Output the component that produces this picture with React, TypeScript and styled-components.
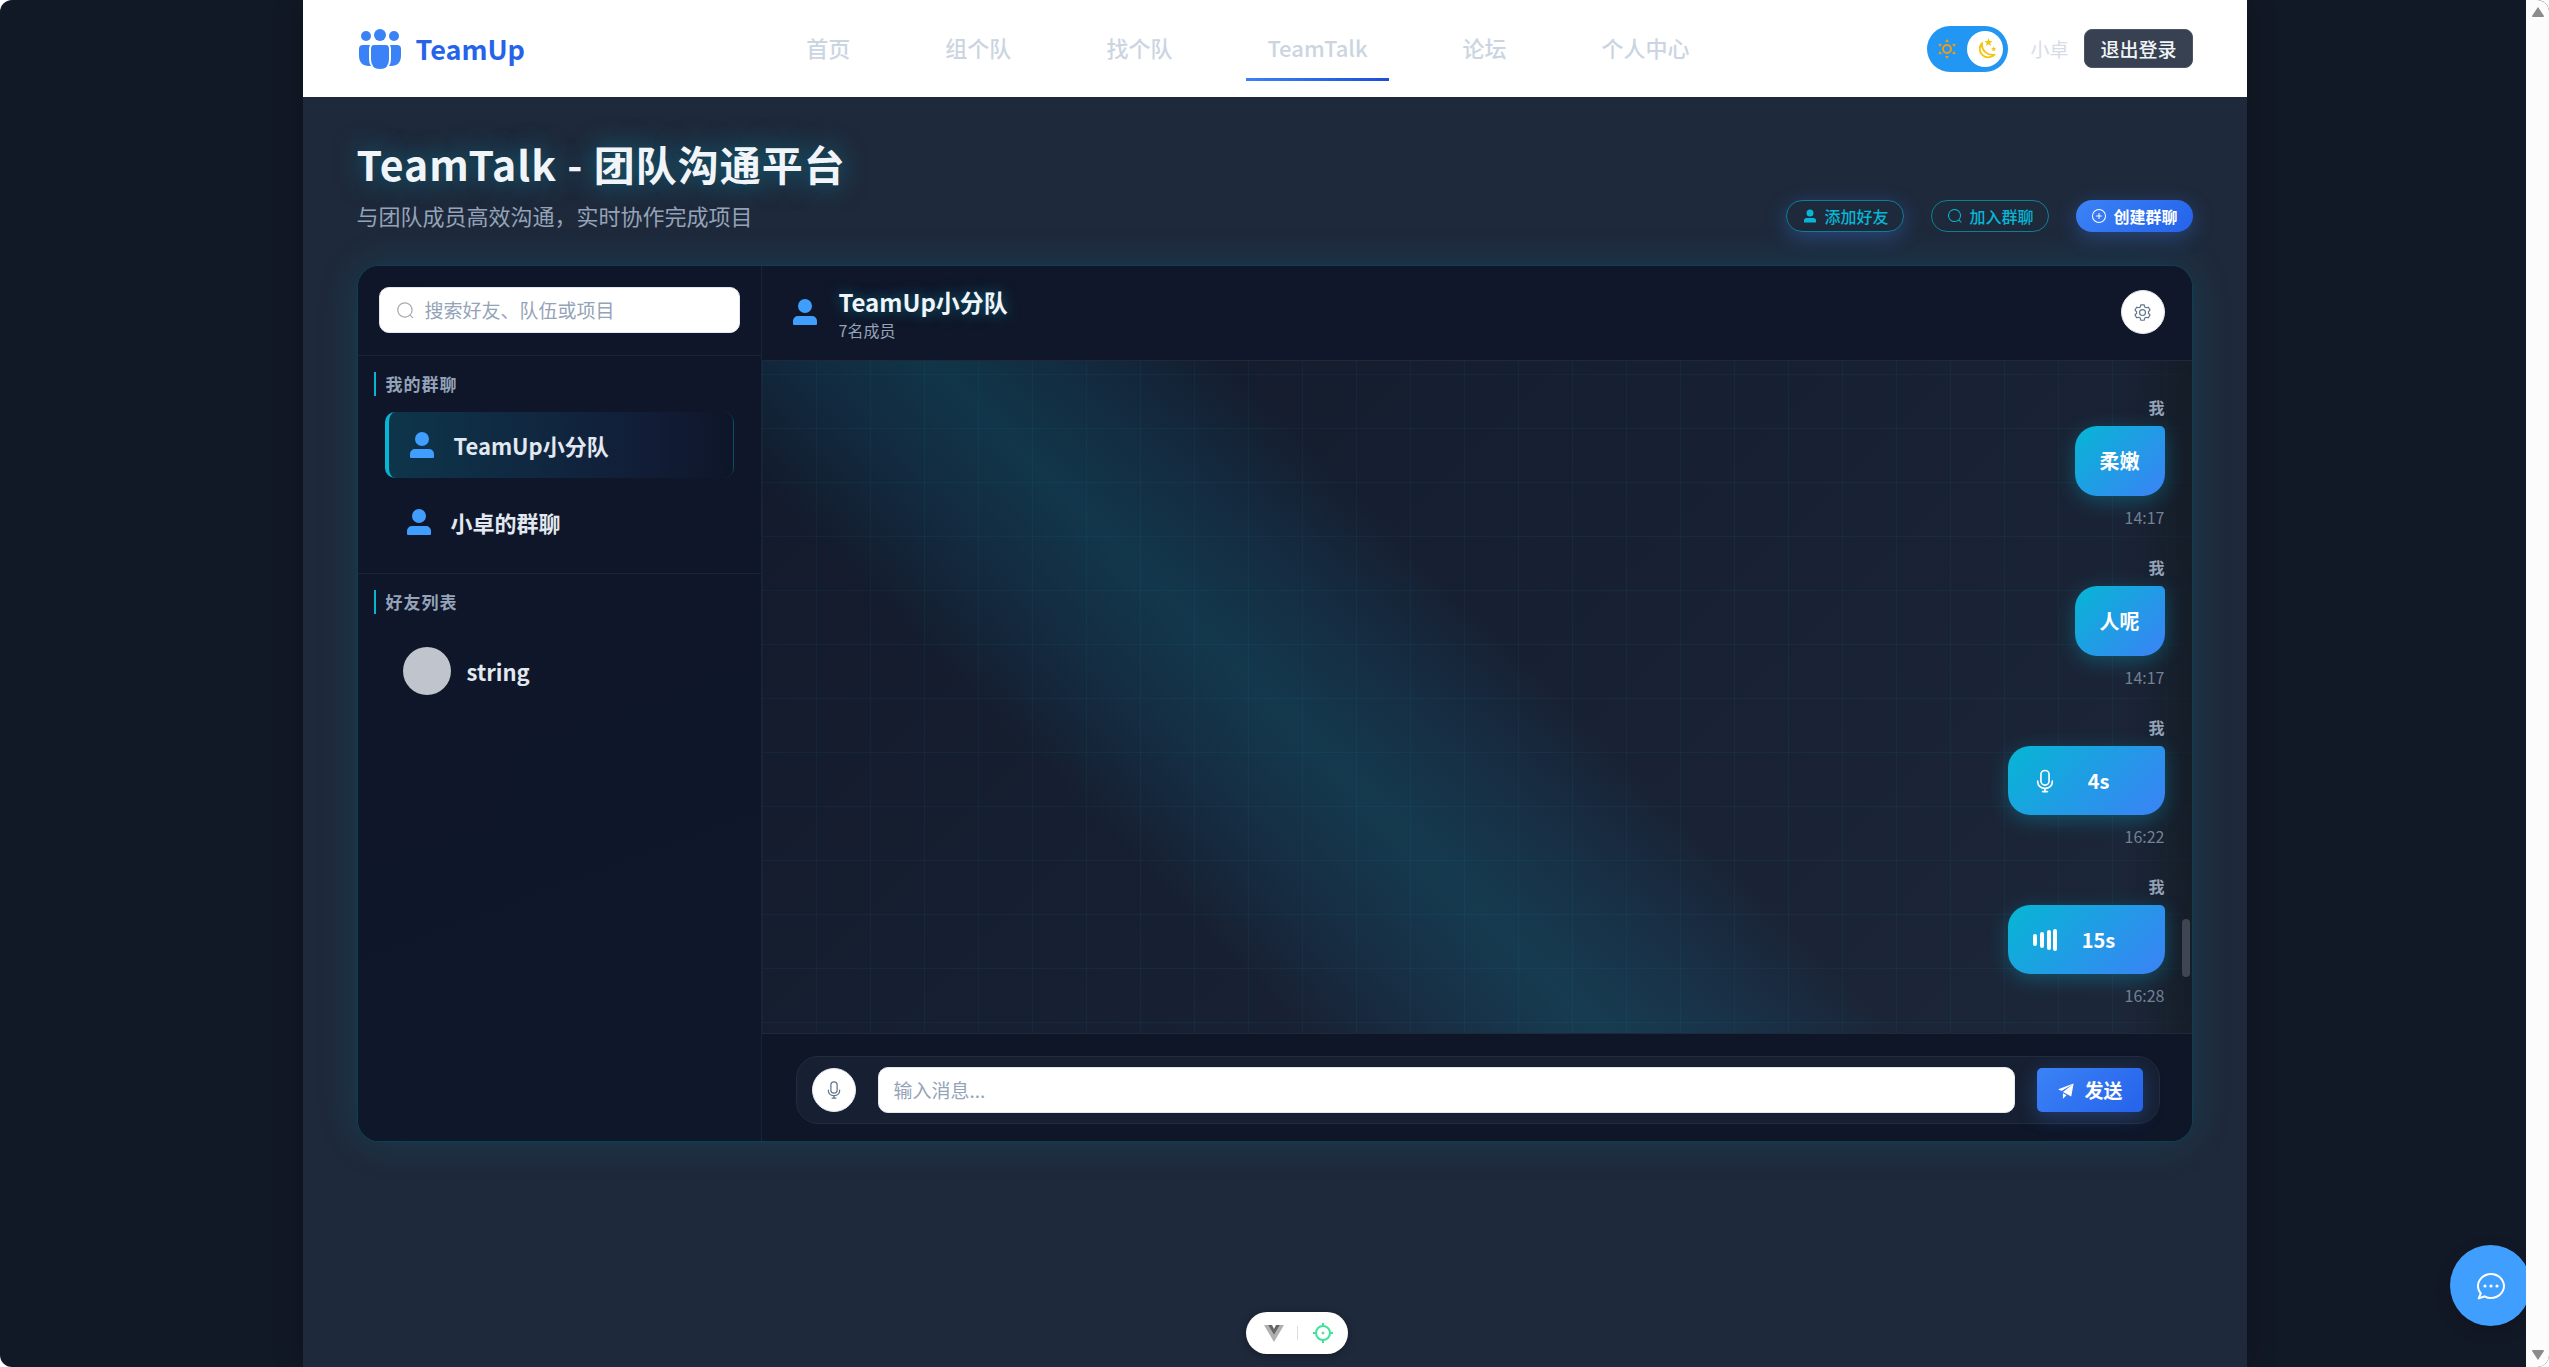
import React, { useState } from "react";
import styled, { createGlobalStyle, css } from "styled-components";

const GlobalStyle = createGlobalStyle`
  *, *::before, *::after { box-sizing: border-box; }
  html, body { margin: 0; padding: 0; background: #ffffff; }
  body {
    font-family: "Noto Sans CJK SC", "Noto Sans", sans-serif;
    color: #f1f5f9;
  }
  button, input { font-family: inherit; }
  button { cursor: pointer; }
  h1, h2, h3, p, ul { margin: 0; padding: 0; }
  ul { list-style: none; }
`;

/* ---------- icons ---------- */

const PATHS = {
  user: [
    "M288 320a224 224 0 1 0 448 0 224 224 0 1 0-448 0zm544 608H160a32 32 0 0 1-32-32v-96a160 160 0 0 1 160-160h448a160 160 0 0 1 160 160v96a32 32 0 0 1-32 32z",
  ],
  search: [
    "m795.904 750.72 124.992 124.928a32 32 0 0 1-45.248 45.248L750.656 795.904a416 416 0 1 1 45.248-45.248zM480 832a352 352 0 1 0 0-704 352 352 0 0 0 0 704",
  ],
  plus: [
    "M352 480h320a32 32 0 1 1 0 64H352a32 32 0 0 1 0-64",
    "M480 672V352a32 32 0 1 1 64 0v320a32 32 0 0 1-64 0",
    "M512 896a384 384 0 1 0 0-768 384 384 0 0 0 0 768m0 64a448 448 0 1 1 0-896 448 448 0 0 1 0 896",
  ],
  mic: [
    "M512 128a128 128 0 0 0-128 128v256a128 128 0 1 0 256 0V256a128 128 0 0 0-128-128m0-64a192 192 0 0 1 192 192v256a192 192 0 1 1-384 0V256A192 192 0 0 1 512 64m-32 832v-64a288 288 0 0 1-288-288v-32a32 32 0 0 1 64 0v32a224 224 0 0 0 224 224h64a224 224 0 0 0 224-224v-32a32 32 0 1 1 64 0v32a288 288 0 0 1-288 288v64h64a32 32 0 1 1 0 64H416a32 32 0 1 1 0-64z",
  ],
  setting: [
    "M600.704 64a32 32 0 0 1 30.464 22.208l35.2 109.376c14.784 7.232 28.928 15.36 42.432 24.512l112.384-24.192a32 32 0 0 1 34.432 15.36L944.32 364.8a32 32 0 0 1-4.032 37.504l-77.12 85.12a357.12 357.12 0 0 1 0 49.024l77.12 85.248a32 32 0 0 1 4.032 37.504l-88.704 153.6a32 32 0 0 1-34.432 15.296L708.8 803.904c-13.44 9.088-27.648 17.28-42.368 24.512l-35.264 109.376A32 32 0 0 1 600.704 960H423.296a32 32 0 0 1-30.464-22.208L357.696 828.48a351.616 351.616 0 0 1-42.56-24.64l-112.32 24.256a32 32 0 0 1-34.432-15.36L79.68 659.2a32 32 0 0 1 4.032-37.504l77.12-85.248a357.12 357.12 0 0 1 0-48.896l-77.12-85.248A32 32 0 0 1 79.68 364.8l88.704-153.6a32 32 0 0 1 34.432-15.296l112.32 24.256c13.568-9.152 27.776-17.408 42.56-24.64l35.2-109.312A32 32 0 0 1 423.232 64H600.64zm-23.424 64H446.72l-36.352 113.088-24.512 11.968a294.113 294.113 0 0 0-34.816 20.096l-22.656 15.36-116.224-25.088-65.28 113.152 79.68 88.192-1.92 27.136a293.12 293.12 0 0 0 0 40.192l1.92 27.136-79.808 88.192 65.344 113.152 116.224-25.024 22.656 15.296a294.113 294.113 0 0 0 34.816 20.096l24.512 11.968L446.72 896h130.688l36.48-113.152 24.448-11.904a288.282 288.282 0 0 0 34.752-20.096l22.592-15.296 116.288 25.024 65.28-113.152-79.744-88.192 1.92-27.136a293.12 293.12 0 0 0 0-40.256l-1.92-27.136 79.808-88.128-65.344-113.152-116.288 24.96-22.592-15.232a287.616 287.616 0 0 0-34.752-20.096l-24.448-11.904L577.344 128zM512 320a192 192 0 1 1 0 384 192 192 0 0 1 0-384m0 64a128 128 0 1 0 0 256 128 128 0 0 0 0-256",
  ],
  send: [
    "m64 448 832-320-128 704-446.08-243.328L832 192 242.816 545.472zm256 512V657.024L512 768z",
  ],
  chat: [
    "m174.72 855.68 135.296-45.12 23.68 11.84C388.096 849.536 448.576 864 512 864c211.84 0 384-166.784 384-352S723.84 160 512 160 128 326.784 128 512c0 69.12 24.96 139.264 70.848 199.232l22.08 28.8-46.272 115.584zm-45.248 82.56A32 32 0 0 1 89.6 896l58.368-145.92C94.72 680.32 64 596.864 64 512 64 299.904 256 96 512 96s448 203.904 448 416-192 416-448 416a461.056 461.056 0 0 1-206.912-48.384l-175.616 58.56z",
    "M512 563.2a51.2 51.2 0 1 1 0-102.4 51.2 51.2 0 0 1 0 102.4m192 0a51.2 51.2 0 1 1 0-102.4 51.2 51.2 0 0 1 0 102.4m-384 0a51.2 51.2 0 1 1 0-102.4 51.2 51.2 0 0 1 0 102.4",
  ],
};

const Svg = styled.svg`
  display: block;
  flex: none;
`;

function Icon({ name, size, color = "currentColor" }: { name: keyof typeof PATHS; size: number; color?: string }) {
  return (
    <Svg width={size} height={size} viewBox="0 0 1024 1024" fill={color} aria-hidden="true">
      {PATHS[name].map((d) => (
        <path key={d} d={d} />
      ))}
    </Svg>
  );
}

const LogoMark = () => (
  <Svg width="46" height="42" viewBox="0 0 46 42" fill="#3b82f6" aria-hidden="true">
    <circle cx="9" cy="8" r="5" />
    <circle cx="23" cy="7" r="6" />
    <circle cx="37" cy="8" r="5" />
    <path d="M6 17h7q-1 2-1 4v10q0 4 2 7h-2q-10 0-10-11v-6q0-4 4-4z" />
    <path d="M40 17h-7q1 2 1 4v10q0 4-2 7h2q10 0 10-11v-6q0-4-4-4z" />
    <path d="M17 17h12q3 0 3 4v10q0 10-9 10t-9-10V21q0-4 3-4z" />
  </Svg>
);

const SunIcon = () => (
  <Svg width="20" height="20" viewBox="0 0 20 20" aria-hidden="true">
    <circle cx="10" cy="10" r="4" fill="none" stroke="#f39c12" strokeWidth="2" />
    {[0, 60, 120, 180, 240, 300].map((a) => (
      <path key={a} d="M10 0l2 3H8z" fill="#f39c12" transform={`rotate(${a} 10 10)`} />
    ))}
  </Svg>
);

/* Five-pointed star centred on (cx, cy). */
const star = (cx: number, cy: number, r: number) =>
  Array.from({ length: 10 }, (_, i) => {
    const a = (i * Math.PI) / 5 - Math.PI / 2;
    const k = i % 2 ? r * 0.42 : r;
    return `${(cx + k * Math.cos(a)).toFixed(2)},${(cy + k * Math.sin(a)).toFixed(2)}`;
  }).join(" ");

const MoonIcon = () => (
  <Svg width="20" height="22" viewBox="0 0 20 22" aria-hidden="true">
    <path
      d="M5 5a8 8 0 1 0 12.600 11.600A10.500 10.500 0 0 1 5 5z"
      fill="none"
      stroke="#f1c40f"
      strokeWidth="1.800"
      strokeLinejoin="round"
    />
    <polygon points={star(11.5, 4.5, 4.3)} fill="#f1c40f" />
    <polygon points={star(16.7, 11, 2.7)} fill="#f1c40f" />
  </Svg>
);

const WaveIcon = () => (
  <Svg width="24" height="24" viewBox="0 0 24 24" fill="#ffffff" aria-hidden="true">
    <rect x="0" y="6" width="4" height="12" rx="2" />
    <rect x="7" y="4" width="4" height="16" rx="2" />
    <rect x="14" y="2" width="4" height="20" rx="2" />
    <rect x="20" y="1" width="4" height="22" rx="2" />
  </Svg>
);

const VueIcon = () => (
  <Svg width="20" height="20" viewBox="0 -2 20 20" aria-hidden="true">
    <path d="M0 0h4l6 10 6-10h4L10 17z" fill="#b0b0b0" />
    <path d="M4 0h4l2 4 2-4h4l-6 10z" fill="#666666" />
  </Svg>
);

const TargetIcon = () => (
  <Svg width="20" height="20" viewBox="0 0 20 20" fill="none" stroke="#3fe39c" strokeWidth="2" aria-hidden="true">
    <circle cx="10" cy="10" r="7" />
    <path d="M10 0v4M10 16v4M0 10h4M16 10h4" />
    <circle cx="10" cy="10" r="1" fill="#3fe39c" stroke="#3fe39c" strokeWidth="1" />
  </Svg>
);

/* ---------- page frame ---------- */

const Page = styled.div`
  position: relative;
  min-height: 100vh;
  background: #121926;
  border-radius: 12px;
  overflow: hidden;
`;

const Shell = styled.div`
  max-width: 1944px;
  min-height: 100vh;
  margin: 0 auto;
  background: #1e293b;
  box-shadow: 0 0 27px rgba(0, 0, 0, 0.3);
`;

const TopBar = styled.header`
  display: flex;
  align-items: center;
  height: 97px;
  padding: 0 54px;
  background: #ffffff;
`;

const Brand = styled.a`
  display: flex;
  align-items: center;
  gap: 13px;
  flex: 0 0 212px;
  color: #2563eb;
  font-size: 27px;
  line-height: 40px;
  font-weight: 700;
  text-decoration: none;
`;

const Nav = styled.nav`
  display: flex;
  flex: 1;
  justify-content: center;
  gap: 53px;
`;

const NavLink = styled.a<{ $active?: boolean }>`
  padding: 15px 21px;
  border-bottom: 3px solid transparent;
  color: #cbd5e1;
  font-size: 22px;
  line-height: 32px;
  font-weight: 500;
  text-decoration: none;
  ${(p) => p.$active && css`border-image: linear-gradient(90deg, #3b82f6, #1d4ed8) 1;`}
`;

const UserArea = styled.div`
  display: flex;
  align-items: center;
`;

const ThemeSwitch = styled.label`
  position: relative;
  display: flex;
  align-items: center;
  justify-content: space-between;
  width: 81px;
  height: 46px;
  padding: 0 5px 0 10px;
  border-radius: 23px;
  background: #2196f3;
  cursor: pointer;
`;

const SwitchInput = styled.input`
  position: absolute;
  inset: 0;
  width: 100%;
  height: 100%;
  margin: 0;
  opacity: 0;
  cursor: pointer;
`;

const Knob = styled.span`
  display: flex;
  align-items: center;
  justify-content: center;
  width: 36px;
  height: 36px;
  padding-left: 4px;
  border-radius: 50%;
  background: #ffffff;
`;

const UserName = styled.span`
  margin: 0 16px 0 22px;
  color: #d5dce7;
  font-size: 19px;
  line-height: 30px;
`;

const LogoutButton = styled.button`
  height: 39px;
  padding: 0 15px;
  border: 1px solid #4b5563;
  border-radius: 8px;
  background: #374151;
  color: #f1f5f9;
  font-size: 19px;
  line-height: 30px;
  font-weight: 500;
`;

/* ---------- hero ---------- */

const Main = styled.main`
  padding: 38px 54px;
`;

const Hero = styled.section`
  display: flex;
  align-items: flex-end;
  justify-content: space-between;
  margin-bottom: 33px;
`;

const HeroText = styled.div`
  display: grid;
  gap: 9px;
  padding-bottom: 2px;
`;

const Title = styled.h1`
  color: #f1f5f9;
  font-size: 41px;
  line-height: 56px;
  font-weight: 700;
  letter-spacing: 1px;
  text-shadow: 0 0 27px rgba(6, 182, 212, 0.5);
`;

const Subtitle = styled.p`
  color: #94a3b8;
  font-size: 22px;
  line-height: 30px;
`;

const Actions = styled.div`
  display: flex;
  gap: 27px;
`;

const PillButton = styled.button<{ $primary?: boolean; $glow?: boolean }>`
  display: flex;
  align-items: center;
  justify-content: center;
  gap: 6px;
  height: 32px;
  padding: 0 15px;
  border: 1px solid rgba(6, 182, 212, 0.6);
  border-radius: 16px;
  background: transparent;
  color: #06b6d4;
  font-size: 16px;
  line-height: 24px;
  font-weight: 500;
  ${(p) => p.$glow && css`box-shadow: 0 5px 20px rgba(59, 130, 246, 0.35);`}
  ${(p) =>
    p.$primary &&
    css`
      border: 0;
      background: linear-gradient(135deg, #3b82f6, #2563eb);
      color: #ffffff;
      font-weight: 700;
    `}
`;

/* ---------- panel ---------- */

const Panel = styled.section`
  display: grid;
  grid-template-columns: 404px 1fr;
  border: 1px solid rgba(6, 182, 212, 0.25);
  border-radius: 22px;
  background: #0f172a;
  box-shadow: 0 0 43px rgba(6, 182, 212, 0.14);
  overflow: hidden;
`;

const Sidebar = styled.aside`
  border-right: 1px solid #1a2436;
  background: linear-gradient(160deg, #0f1629, #0f172a);
`;

const SearchRow = styled.div`
  padding: 21px 21px 22px;
  border-bottom: 1px solid #1a2436;
`;

const SearchBox = styled.label`
  display: flex;
  align-items: center;
  gap: 10px;
  height: 46px;
  padding: 0 16px;
  border: 1px solid #e2e8f0;
  border-radius: 10px;
  background: #ffffff;
  color: #a8abb2;
`;

const TextInput = styled.input`
  flex: 1;
  min-width: 0;
  padding: 0;
  border: 0;
  outline: 0;
  background: transparent;
  color: #1e293b;
  font-size: 19px;
  line-height: 30px;
  &::placeholder { color: #94a3b8; opacity: 1; }
`;

const Section = styled.section`
  padding: 16px 16px 18px;
  & + & { border-top: 1px solid #1a2436; }
`;

const SectionTitle = styled.h3`
  padding-left: 10px;
  border-left: 2px solid #06b6d4;
  color: #94a3b8;
  font-size: 17px;
  line-height: 24px;
  font-weight: 700;
  letter-spacing: 1px;
`;

const ContactList = styled.ul`
  display: grid;
  gap: 11px;
  margin: 16px 11px 0;
`;

const Contact = styled.button<{ $active?: boolean }>`
  display: flex;
  align-items: center;
  gap: 16px;
  width: 100%;
  padding: 17px;
  border: 0 solid transparent;
  border-width: 0 1px;
  border-radius: 10px;
  background: transparent;
  color: #e2e8f0;
  font-size: 22px;
  line-height: 32px;
  font-weight: 700;
  text-align: left;
  ${(p) =>
    p.$active &&
    css`
      border-left: 4px solid #06b6d4;
      border-right-color: rgba(6, 182, 212, 0.2);
      background: linear-gradient(90deg, rgba(6, 182, 212, 0.2), rgba(59, 130, 246, 0.08) 70%, transparent);
    `}
`;

const Avatar = styled.span`
  width: 48px;
  height: 48px;
  border-radius: 50%;
  background: #c0c4cc;
`;

/* ---------- chat ---------- */

const Chat = styled.section`
  display: flex;
  flex-direction: column;
  min-width: 0;
`;

const ChatHeader = styled.header`
  display: flex;
  align-items: center;
  gap: 18px;
  height: 95px;
  padding: 0 27px 2px;
  border-bottom: 1px solid #1e293b;
  background: #10172a;
`;

const ChatTitles = styled.div`
  flex: 1;
`;

const ChatTitle = styled.h2`
  color: #f1f5f9;
  font-size: 24px;
  line-height: 36px;
  font-weight: 700;
  text-shadow: 0 0 14px rgba(6, 182, 212, 0.5);
`;

const ChatMeta = styled.p`
  color: #94a3b8;
  font-size: 16px;
  line-height: 20px;
`;

const RoundButton = styled.button`
  display: flex;
  align-items: center;
  justify-content: center;
  width: 44px;
  height: 44px;
  flex: none;
  padding: 0;
  border: 1px solid #e2e8f0;
  border-radius: 50%;
  background: #ffffff;
  color: #64748b;
`;

const Messages = styled.div`
  position: relative;
  flex: 1;
  padding: 34px 27px 26px;
  background:
    linear-gradient(270deg, rgba(18, 25, 32, 0.7), rgba(18, 25, 32, 0) 68px),
    linear-gradient(90deg, rgba(6, 182, 212, 0.06) 1px, transparent 1px) 0 0 / 54px 54px,
    linear-gradient(rgba(6, 182, 212, 0.06) 1px, transparent 1px) 0 13px / 54px 54px,
    linear-gradient(45deg, rgba(6, 182, 212, 0) 26%, rgba(10, 165, 220, 0.1) 33%, rgba(6, 182, 212, 0.17) 40%, rgba(10, 165, 220, 0.1) 47%, rgba(6, 182, 212, 0) 54%),
    linear-gradient(135deg, #121a2b, #1d273a);
`;

const MessageList = styled.ul`
  display: grid;
  gap: 26px;
`;

const Message = styled.li`
  display: flex;
  flex-direction: column;
  align-items: flex-end;
`;

const Sender = styled.span`
  margin-bottom: 7px;
  color: #94a3b8;
  font-size: 16px;
  line-height: 24px;
  font-weight: 700;
`;

const bubble = css`
  border-radius: 22px 5px 22px 22px;
  background: linear-gradient(135deg, #06b6d4, #3b82f6);
  box-shadow: 0 5px 20px rgba(6, 182, 212, 0.3);
  color: #ffffff;
  font-size: 20px;
  line-height: 30px;
  font-weight: 700;
`;

const TextBubble = styled.p`
  ${bubble}
  padding: 20px 25px;
`;

const VoiceBubble = styled.button`
  ${bubble}
  display: grid;
  grid-template-columns: 24px 1fr;
  align-items: center;
  justify-items: center;
  width: 157px;
  height: 69px;
  padding: 0 42px 0 25px;
  border: 0;
`;

const Duration = styled.span`
  padding-left: 18px;
`;

const Time = styled.time`
  margin-top: 9px;
  color: #728096;
  font-size: 16px;
  line-height: 24px;
`;

const ScrollThumb = styled.span`
  position: absolute;
  right: 2px;
  bottom: 56px;
  width: 8px;
  height: 58px;
  border-radius: 4px;
  background: #3f4552;
`;

const Composer = styled.footer`
  padding: 22px 32px 17px 34px;
  border-top: 1px solid #1e293b;
  background: #0e1628;
`;

const ComposerBar = styled.form`
  display: flex;
  align-items: center;
  gap: 22px;
  padding: 10px 16px 10px 15px;
  border: 1px solid #232c3d;
  border-radius: 22px;
  background: #172032;
`;

const MessageBox = styled.label`
  display: flex;
  flex: 1;
  align-items: center;
  height: 46px;
  padding: 0 15px;
  border: 1px solid #e2e8f0;
  border-radius: 10px;
  background: #ffffff;
`;

const SendButton = styled.button`
  display: flex;
  align-items: center;
  gap: 8px;
  height: 44px;
  padding: 0 20px;
  border: 0;
  border-radius: 5px;
  background: linear-gradient(135deg, #3b82f6, #2563eb);
  box-shadow: 0 5px 20px rgba(59, 130, 246, 0.3);
  color: #ffffff;
  font-size: 19px;
  line-height: 30px;
  font-weight: 700;
`;

/* ---------- floating layers ---------- */

const FloatingChat = styled.button`
  position: fixed;
  right: 18px;
  bottom: 41px;
  display: flex;
  align-items: center;
  justify-content: center;
  width: 81px;
  height: 81px;
  padding: 0;
  border: 0;
  border-radius: 50%;
  background: #409eff;
  color: #ffffff;
  box-shadow: 0 5px 16px rgba(0, 0, 0, 0.2);
`;

const DevTools = styled.div`
  position: fixed;
  left: 1246px;
  bottom: 13px;
  display: flex;
  align-items: center;
  height: 42px;
  border-radius: 21px;
  background: #ffffff;
  box-shadow: 0 2px 8px rgba(0, 0, 0, 0.3);
`;

const ToolButton = styled.button`
  display: flex;
  align-items: center;
  justify-content: center;
  width: 51px;
  height: 20px;
  padding: 0 0 0 5px;
  border: 0;
  background: transparent;
  & + & {
    height: 14px;
    padding: 0;
    border-left: 1px solid #dddddd;
  }
`;

const PageScroll = styled.div`
  position: fixed;
  top: 0;
  right: 0;
  bottom: 0;
  display: flex;
  flex-direction: column;
  align-items: center;
  justify-content: space-between;
  width: 23px;
  padding: 6px 0;
  border-radius: 0 12px 12px 0;
  background: #fcfcfc;
`;

const NAV = ["首页", "组个队", "找个队", "TeamTalk", "论坛", "个人中心"];
const GROUPS = ["TeamUp小分队", "小卓的群聊"];

type Msg = { id: number; time: string; text?: string; voice?: string; playing?: boolean };

const MESSAGES: Msg[] = [
  { id: 1, text: "柔嫩", time: "14:17" },
  { id: 2, text: "人呢", time: "14:17" },
  { id: 3, voice: "4s", time: "16:22" },
  { id: 4, voice: "15s", time: "16:28", playing: true },
];

export default function App() {
  const [dark, setDark] = useState(true);
  const [group, setGroup] = useState(GROUPS[0]);

  return (
    <Page>
      <GlobalStyle />
      <Shell>
        <TopBar>
          <Brand href="#home">
            <LogoMark />
            TeamUp
          </Brand>
          <Nav>
            {NAV.map((item) => (
              <NavLink key={item} href={`#${item}`} $active={item === "TeamTalk"}>
                {item}
              </NavLink>
            ))}
          </Nav>
          <UserArea>
            <ThemeSwitch>
              <SwitchInput
                type="checkbox"
                role="switch"
                aria-label="深色模式"
                checked={dark}
                onChange={(e) => setDark(e.target.checked)}
              />
              <SunIcon />
              <Knob>
                <MoonIcon />
              </Knob>
            </ThemeSwitch>
            <UserName>小卓</UserName>
            <LogoutButton type="button">退出登录</LogoutButton>
          </UserArea>
        </TopBar>

        <Main>
          <Hero>
            <HeroText>
              <Title>TeamTalk - 团队沟通平台</Title>
              <Subtitle>与团队成员高效沟通，实时协作完成项目</Subtitle>
            </HeroText>
            <Actions>
              <PillButton type="button" $glow>
                <Icon name="user" size={16} />
                添加好友
              </PillButton>
              <PillButton type="button">
                <Icon name="search" size={16} />
                加入群聊
              </PillButton>
              <PillButton type="button" $primary $glow>
                <Icon name="plus" size={16} />
                创建群聊
              </PillButton>
            </Actions>
          </Hero>

          <Panel>
            <Sidebar>
              <SearchRow>
                <SearchBox>
                  <Icon name="search" size={19} />
                  <TextInput type="text" aria-label="搜索" placeholder="搜索好友、队伍或项目" />
                </SearchBox>
              </SearchRow>
              <Section>
                <SectionTitle>我的群聊</SectionTitle>
                <ContactList>
                  {GROUPS.map((name) => (
                    <li key={name}>
                      <Contact type="button" $active={name === group} onClick={() => setGroup(name)}>
                        <Icon name="user" size={32} color="#409eff" />
                        {name}
                      </Contact>
                    </li>
                  ))}
                </ContactList>
              </Section>
              <Section>
                <SectionTitle>好友列表</SectionTitle>
                <ContactList>
                  <li>
                    <Contact type="button">
                      <Avatar />
                      string
                    </Contact>
                  </li>
                </ContactList>
              </Section>
            </Sidebar>

            <Chat>
              <ChatHeader>
                <Icon name="user" size={32} color="#409eff" />
                <ChatTitles>
                  <ChatTitle>{group}</ChatTitle>
                  <ChatMeta>7名成员</ChatMeta>
                </ChatTitles>
                <RoundButton type="button" aria-label="设置">
                  <Icon name="setting" size={19} />
                </RoundButton>
              </ChatHeader>

              <Messages>
                <MessageList>
                  {MESSAGES.map((m) => (
                    <Message key={m.id}>
                      <Sender>我</Sender>
                      {m.voice ? (
                        <VoiceBubble type="button">
                          {m.playing ? <WaveIcon /> : <Icon name="mic" size={26} />}
                          <Duration>{m.voice}</Duration>
                        </VoiceBubble>
                      ) : (
                        <TextBubble>{m.text}</TextBubble>
                      )}
                      <Time>{m.time}</Time>
                    </Message>
                  ))}
                </MessageList>
                <ScrollThumb />
              </Messages>

              <Composer>
                <ComposerBar onSubmit={(e) => e.preventDefault()}>
                  <RoundButton type="button" aria-label="语音">
                    <Icon name="mic" size={20} />
                  </RoundButton>
                  <MessageBox>
                    <TextInput type="text" aria-label="消息" placeholder="输入消息..." />
                  </MessageBox>
                  <SendButton type="submit">
                    <Icon name="send" size={19} />
                    发送
                  </SendButton>
                </ComposerBar>
              </Composer>
            </Chat>
          </Panel>
        </Main>
      </Shell>

      <FloatingChat type="button" aria-label="在线聊天">
        <Icon name="chat" size={32} />
      </FloatingChat>

      <DevTools>
        <ToolButton type="button" aria-label="Vue DevTools">
          <VueIcon />
        </ToolButton>
        <ToolButton type="button" aria-label="Inspector">
          <TargetIcon />
        </ToolButton>
      </DevTools>

      <PageScroll aria-hidden="true">
        <Svg width="14" height="12" viewBox="0 0 14 12" fill="#8b8b8b">
          <path d="M7 1l6 9q0 1-1 1H2q-1 0-1-1z" />
        </Svg>
        <Svg width="14" height="12" viewBox="0 0 14 12" fill="#8b8b8b">
          <path d="M7 11L1 2q0-1 1-1h10q1 0 1 1z" />
        </Svg>
      </PageScroll>
    </Page>
  );
}
